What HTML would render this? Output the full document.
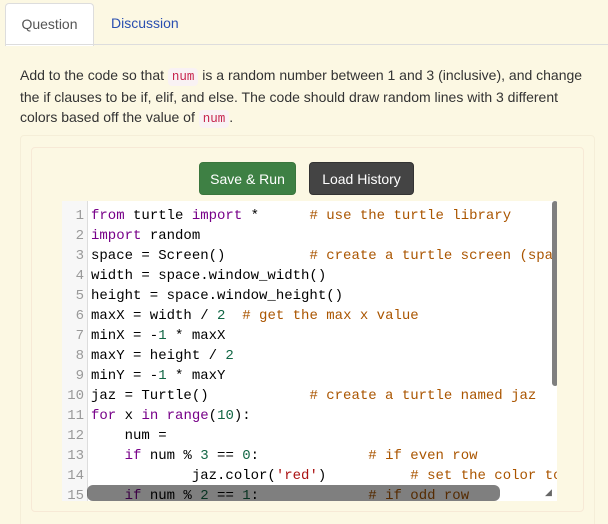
<html style="height:524px;overflow:hidden"><head><style>
body{margin:0;background:#fcf8e3;width:608px;height:524px;overflow:hidden;font-family:"Liberation Sans",sans-serif;position:relative}
.tabline{position:absolute;left:5px;right:0;top:44px;border-top:1px solid #ddd}
.tab{position:absolute;top:3px;height:41px;font-size:14px;line-height:41px}
.t1{left:5px;width:87px;background:#fff;border:1px solid #ddd;border-bottom:none;border-radius:4px 4px 0 0;text-align:center;color:#555;height:42px}
.t2{left:111px;color:#2a4fb0}
p{position:absolute;left:20px;top:65px;margin:0;width:600px;white-space:nowrap;font-size:14px;line-height:20px;color:#333}
code{font-family:"Liberation Mono",monospace;font-size:12.5px;color:#c7254e;background:#f9f2f4;padding:2px 4px;border-radius:4px}
.o{position:absolute;left:20px;top:135px;width:573px;height:400px;border:1px solid #f5eed8;border-radius:4px}
.i{position:absolute;left:31px;top:147px;width:551px;height:363px;border:1px solid #f7e9d6;border-radius:4px}
.b{position:absolute;top:162px;height:33px;line-height:33px;color:#fff;font-size:14px;text-align:center;border-radius:4px}
.code{position:absolute;left:62px;top:201px;width:495px;height:300px;background:#fff;overflow:hidden}
.gut{position:absolute;left:0;top:0;width:25px;height:300px;background:#f7f7f7;border-right:1px solid #ddd}
pre{margin:0;position:absolute;top:5px;font-family:"Liberation Mono",monospace;font-size:14px;line-height:20px}
.ln{left:0;width:22px;text-align:right;color:#999}
.tx{left:29px;color:#000}
.k{color:#708}.c{color:#a50}.n{color:#164}.s{color:#a11}
</style></head><body>
<div class="tab t1">Question</div><div class="tab t2">Discussion</div><div class="tabline"></div>
<p>Add to the code so that <code>num</code> is a random number between 1 and 3 (inclusive), and change<br>the if clauses to be if, elif, and else. The code should draw random lines with 3 different<br>colors based off the value of <code>num</code>.</p>
<div class="o"></div><div class="i"></div>
<div class="b" style="left:199px;width:97px;background:#3e8044;border:1px solid #3a763d;box-sizing:border-box">Save &amp; Run</div>
<div class="b" style="left:309px;width:105px;background:#444;border:1px solid #333;box-sizing:border-box">Load History</div>
<div class="code"><div class="gut"></div>
<pre class="ln">1
2
3
4
5
6
7
8
9
10
11
12
13
14
15</pre>
<pre class="tx"><span class="k">from</span> turtle <span class="k">import</span> *      <span class="c"># use the turtle library</span>
<span class="k">import</span> random
space = Screen()          <span class="c"># create a turtle screen (space)</span>
width = space.window_width()
height = space.window_height()
maxX = width / <span class="n">2</span>  <span class="c"># get the max x value</span>
minX = -<span class="n">1</span> * maxX
maxY = height / <span class="n">2</span>
minY = -<span class="n">1</span> * maxY
jaz = Turtle()            <span class="c"># create a turtle named jaz</span>
<span class="k">for</span> x <span class="k">in</span> <span class="k">range</span>(<span class="n">10</span>):
    num =
    <span class="k">if</span> num % <span class="n">3</span> == <span class="n">0</span>:             <span class="c"># if even row</span>
            jaz.color(<span class="s">'red'</span>)          <span class="c"># set the color to</span>
    <span class="k">if</span> num % <span class="n">2</span> == <span class="n">1</span>:             <span class="c"># if odd row</span></pre>
<div style="position:absolute;left:490px;top:0;width:6px;height:185px;background:#7f7f7f;border-radius:3px"></div>
<div style="position:absolute;left:25px;top:284px;width:413px;height:16px;background:rgba(0,0,0,.5);border-radius:6px"></div>
<div style="position:absolute;left:483px;top:286px;font-size:9px;color:#666">◢</div>
</div>
</body></html>
